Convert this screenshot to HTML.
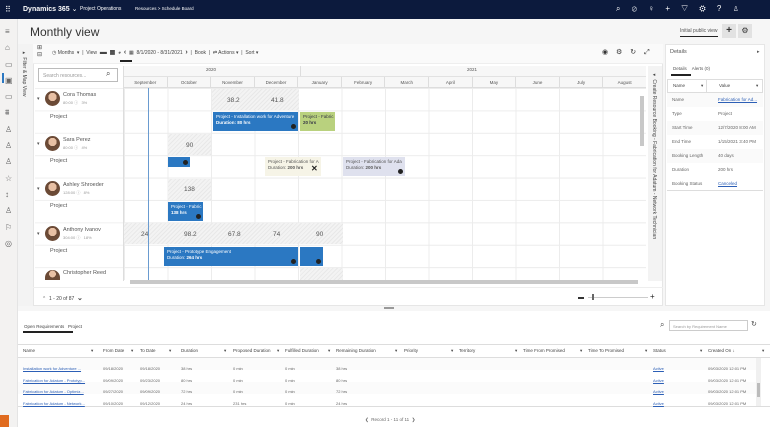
<!DOCTYPE html>
<html><head><meta charset="utf-8"><style>
*{box-sizing:border-box;margin:0;padding:0}
body{width:770px;height:427px;overflow:hidden;background:#fff;font-family:"Liberation Sans",sans-serif;color:#333;position:relative}
.a{position:absolute}
.t{font-size:5px;color:#555;white-space:nowrap}
.hatch{background:repeating-linear-gradient(135deg,#f3f3f3 0 2px,#e8e8e8 2px 3px)}
.bar{background:#2b78c2;color:#fff;font-size:4.5px;padding:2px 3px;line-height:6px;white-space:nowrap;overflow:hidden}
.dot{position:absolute;width:5px;height:5px;border-radius:50%;background:#222;right:2px;bottom:2px}
.av{position:absolute;width:15px;height:15px;border-radius:50%;background:radial-gradient(circle at 50% 40%,#e8c0a4 0 35%,#6b4a36 36%)}
.lnk{color:#2c5fb6;text-decoration:underline}
</style></head><body>
<div class="a" style="left:0;top:0;width:770px;height:19px;background:#0c1a3d"></div>
<div class="a t" style="left:5px;top:5px;color:#fff;font-size:8px">⠿</div>
<div class="a" style="left:23px;top:5px;color:#fff;font-size:7px;font-weight:bold">Dynamics 365 <span style="font-weight:normal">⌄</span></div>
<div class="a t" style="left:80px;top:6px;color:#fff;font-size:5px">Project Operations</div>
<div class="a t" style="left:135px;top:6px;color:#fff;font-size:4.5px">Resources &gt; Schedule Board</div>
<div class="a t" style="left:616px;top:4px;color:#fff;font-size:8px;word-spacing:9px">⌕ ⊘ ♀ + ▽ ⚙ ? ♙</div>
<div class="a" style="left:0;top:19px;width:18px;height:408px;background:#f3f2f1;border-right:1px solid #e4e4e4"></div>
<div class="a t" style="left:5px;top:24px;font-size:8px;color:#666;line-height:16.3px">≡<br>⌂<br>▭<br>▣<br>▭<br>⩩<br>♙<br>♙<br>♙<br>☆<br>↕<br>♙<br>⚐<br>◎</div>
<div class="a" style="left:2px;top:73px;width:2px;height:10px;background:#2b78c2"></div>
<div class="a" style="left:0;top:415px;width:9px;height:12px;background:#e06b1f"></div>
<div class="a" style="left:18px;top:19px;width:752px;height:408px;background:#f6f6f6"></div>
<div class="a" style="left:30px;top:25px;font-size:12px;color:#333">Monthly view</div>
<div class="a t" style="left:680px;top:28px;font-size:5px;border-bottom:1.5px solid #222;padding-bottom:2px">Initial public view</div>
<div class="a" style="left:722px;top:24px;width:14px;height:14px;background:#e2e2e2;font-size:10px;text-align:center;line-height:14px;font-weight:bold">+</div>
<div class="a" style="left:738px;top:24px;width:14px;height:14px;background:#e2e2e2;font-size:8px;text-align:center;line-height:14px">⚙</div>
<div class="a" style="left:18px;top:44px;width:15px;height:262px;background:#f3f3f3"></div>
<div class="a t" style="left:21px;top:50px;writing-mode:vertical-rl;font-size:5px;color:#444">▸ Filter &amp; Map View</div>
<div class="a" style="left:33px;top:44px;width:630px;height:262px;background:#fff;border:1px solid #e6e6e6"></div>
<div class="a" style="left:33px;top:44px;width:630px;height:20px;background:#fafafa;border-bottom:1px solid #eee"></div>
<div class="a t" style="left:37px;top:45px;font-size:6px;line-height:7px;color:#444">⊞<br>⊟</div>
<div class="a t" style="left:52px;top:49px;font-size:5px;color:#444">◷ Months &nbsp;▾ &nbsp;|&nbsp; View &nbsp;<b style="font-size:7px">▬</b> &nbsp;<b style="font-size:6px">▦</b> &nbsp;◕ &nbsp;<b style="font-size:7px">‹</b> &nbsp;▦ &nbsp;8/1/2020 - 8/31/2021 &nbsp;<b style="font-size:7px">›</b> &nbsp;| &nbsp;Book &nbsp;| &nbsp;⇄ Actions ▾ &nbsp;| &nbsp;Sort ▾</div>
<div class="a" style="left:120px;top:60px;width:12px;height:1.5px;background:#222"></div>
<div class="a t" style="left:602px;top:48px;font-size:7px;color:#333;word-spacing:6px">◉ ⚙ ↻ ⤢</div>
<div class="a" style="left:38px;top:68px;width:80px;height:14px;border:1px solid #bbb;background:#fff"></div>
<div class="a t" style="left:43px;top:73px;color:#999">Search resources...</div>
<div class="a t" style="left:106px;top:69px;font-size:8px;color:#444">⌕</div>
<div class="a" style="left:124px;top:66px;width:522px;height:22px;background:#f7f7f7;border-bottom:1px solid #ddd"></div>
<div class="a" style="left:124px;top:76px;width:522px;height:1px;background:#e2e2e2"></div>
<div class="a t" style="left:206px;top:67px;font-size:4.5px">2020</div>
<div class="a t" style="left:467px;top:67px;font-size:4.5px">2021</div>
<div class="a" style="left:300px;top:66px;width:1px;height:10px;background:#ddd"></div>
<div class="a" style="left:124px;top:77px;width:522px;height:11px;display:flex;font-size:4.5px;color:#555">
<div style="flex:1;text-align:center;border-right:1px solid #ddd;line-height:11px">September</div><div style="flex:1;text-align:center;border-right:1px solid #ddd;line-height:11px">October</div><div style="flex:1;text-align:center;border-right:1px solid #ddd;line-height:11px">November</div><div style="flex:1;text-align:center;border-right:1px solid #ddd;line-height:11px">December</div><div style="flex:1;text-align:center;border-right:1px solid #ddd;line-height:11px">January</div><div style="flex:1;text-align:center;border-right:1px solid #ddd;line-height:11px">February</div><div style="flex:1;text-align:center;border-right:1px solid #ddd;line-height:11px">March</div><div style="flex:1;text-align:center;border-right:1px solid #ddd;line-height:11px">April</div><div style="flex:1;text-align:center;border-right:1px solid #ddd;line-height:11px">May</div><div style="flex:1;text-align:center;border-right:1px solid #ddd;line-height:11px">June</div><div style="flex:1;text-align:center;border-right:1px solid #ddd;line-height:11px">July</div><div style="flex:1;text-align:center;line-height:11px">August</div></div>
<div class="a" style="left:124px;top:88px;width:522px;height:192px;background-image:linear-gradient(90deg,#ececec 1px,transparent 1px),linear-gradient(#ececec 1px,transparent 1px);background-size:43.5px 100%,100% 22.4px"></div>
<div class="a" style="left:123px;top:66px;width:1px;height:215px;background:#ddd"></div>
<div class="a hatch" style="left:212px;top:89px;width:87px;height:21px"></div>
<div class="a hatch" style="left:168px;top:134px;width:43px;height:21px"></div>
<div class="a hatch" style="left:168px;top:179px;width:43px;height:21px"></div>
<div class="a hatch" style="left:124px;top:223px;width:219px;height:21px"></div>
<div class="a hatch" style="left:300px;top:268px;width:43px;height:12px"></div>
<div class="a t" style="left:227px;top:97px;font-size:6.5px;color:#555">38.2</div>
<div class="a t" style="left:271px;top:97px;font-size:6.5px;color:#555">41.8</div>
<div class="a t" style="left:186px;top:142px;font-size:6.5px;color:#555">90</div>
<div class="a t" style="left:184px;top:186px;font-size:6.5px;color:#555">138</div>
<div class="a t" style="left:141px;top:231px;font-size:6.5px;color:#555">24</div>
<div class="a t" style="left:184px;top:231px;font-size:6.5px;color:#555">98.2</div>
<div class="a t" style="left:228px;top:231px;font-size:6.5px;color:#555">67.8</div>
<div class="a t" style="left:273px;top:231px;font-size:6.5px;color:#555">74</div>
<div class="a t" style="left:316px;top:231px;font-size:6.5px;color:#555">90</div>
<div class="a" style="left:148px;top:88px;width:1px;height:192px;background:#6a9bd0"></div>
<div class="a bar" style="left:213px;top:112px;width:85px;height:19px">Project - Installation work for Adventure<br><b>Duration: 80 hrs</b><div class="dot"></div></div>
<div class="a bar" style="left:300px;top:112px;width:35px;height:19px;background:#b9d17e;color:#334">Project - Fabric<br><b>20 hrs</b></div>
<div class="a bar" style="left:168px;top:157px;width:22px;height:10px"><div class="dot"></div></div>
<div class="a bar" style="left:265px;top:157px;width:56px;height:19px;background:#f6f4e7;color:#555">Project - Fabrication for A<br>Duration: <b>200 hrs</b></div>
<div class="a t" style="left:311px;top:164px;font-size:8px;color:#222;font-weight:bold">✕</div>
<div class="a bar" style="left:343px;top:157px;width:62px;height:19px;background:#dfe1ee;color:#555">Project - Fabrication for Ada<br>Duration: <b>200 hrs</b><div class="dot"></div></div>
<div class="a bar" style="left:168px;top:202px;width:35px;height:19px">Project - Fabric<br><b>138 hrs</b><div class="dot"></div></div>
<div class="a bar" style="left:164px;top:247px;width:134px;height:19px">Project - Prototype Engagement<br>Duration: <b>264 hrs</b><div class="dot"></div></div>
<div class="a bar" style="left:300px;top:247px;width:23px;height:19px"><div class="dot"></div></div>
<div class="a" style="left:35px;top:88px;width:88px;height:192px;background-image:linear-gradient(#f0f0f0 1px,transparent 1px);background-size:100% 22.4px"></div>
<div class="a t" style="left:37px;top:96px">▾</div><div class="av" style="left:45px;top:91px"></div>
<div class="a t" style="left:63px;top:92px;font-size:5.5px">Cora Thomas</div><div class="a t" style="left:63px;top:100px;font-size:4px;color:#999">80:00 ⓘ &nbsp;&nbsp;3%</div>
<div class="a t" style="left:50px;top:114px;font-size:5.5px">Project</div>
<div class="a t" style="left:37px;top:141px">▾</div><div class="av" style="left:45px;top:136px"></div>
<div class="a t" style="left:63px;top:137px;font-size:5.5px">Sara Perez</div><div class="a t" style="left:63px;top:145px;font-size:4px;color:#999">80:00 ⓘ &nbsp;&nbsp;4%</div>
<div class="a t" style="left:50px;top:158px;font-size:5.5px">Project</div>
<div class="a t" style="left:37px;top:186px">▾</div><div class="av" style="left:45px;top:181px"></div>
<div class="a t" style="left:63px;top:182px;font-size:5.5px">Ashley Shroeder</div><div class="a t" style="left:63px;top:190px;font-size:4px;color:#999">128:00 ⓘ &nbsp;&nbsp;8%</div>
<div class="a t" style="left:50px;top:203px;font-size:5.5px">Project</div>
<div class="a t" style="left:37px;top:231px">▾</div><div class="av" style="left:45px;top:226px"></div>
<div class="a t" style="left:63px;top:227px;font-size:5.5px">Anthony Ivanov</div><div class="a t" style="left:63px;top:235px;font-size:4px;color:#999">304:00 ⓘ &nbsp;&nbsp;18%</div>
<div class="a t" style="left:50px;top:248px;font-size:5.5px">Project</div>
<div class="a av" style="left:45px;top:270px;height:10px;border-radius:8px 8px 0 0"></div>
<div class="a t" style="left:63px;top:270px;font-size:5.5px">Christopher Reed</div>
<div class="a" style="left:130px;top:280px;width:508px;height:4px;background:#c8c8c8"></div>
<div class="a" style="left:640px;top:96px;width:4px;height:50px;background:#c8c8c8"></div>
<div class="a" style="left:33px;top:287px;width:630px;height:1px;background:#eee"></div>
<div class="a t" style="left:42px;top:294px;font-size:5px;color:#444">⌃ &nbsp;1 - 20 of 87 &nbsp;<b style="font-size:7px">⌄</b></div>
<div class="a" style="left:578px;top:297px;width:6px;height:1.5px;background:#333"></div>
<div class="a" style="left:588px;top:297px;width:60px;height:1px;background:#ccc"></div>
<div class="a" style="left:592px;top:294px;width:2px;height:6px;background:#666"></div>
<div class="a t" style="left:650px;top:292px;font-size:8px;color:#222">+</div>
<div class="a" style="left:648px;top:66px;width:14px;height:215px;background:#f3f3f3"></div>
<div class="a t" style="left:651px;top:72px;writing-mode:vertical-rl;font-size:5px;color:#444">◂ Create Resource Booking - Fabrication for Adatum - Network Technician</div>
<div class="a" style="left:665px;top:44px;width:100px;height:262px;background:#fff;border:1px solid #e6e6e6"></div>
<div class="a t" style="left:670px;top:49px;font-size:5.5px">Details</div><div class="a t" style="left:757px;top:49px">▸</div>
<div class="a t" style="left:673px;top:66px;font-size:4.5px">Details &nbsp;&nbsp;&nbsp;Alerts (0)</div>
<div class="a" style="left:671px;top:74px;width:20px;height:1.5px;background:#222"></div>
<div class="a" style="left:667px;top:79px;width:96px;height:14px;border:1px solid #ddd;font-size:4.5px;color:#444;line-height:12px"><span class="a" style="left:5px">Name</span><span class="a" style="left:33px">▾</span><span class="a" style="left:38px;top:0;height:12px;border-left:1px solid #ddd"></span><span class="a" style="left:51px">Value</span><span class="a" style="left:88px">▾</span></div>
<div class="a" style="left:667px;top:93px;width:96px;font-size:4.5px;color:#666">
<div style="height:14px;line-height:14px;position:relative;background:#fafafa"><span class="a" style="left:5px">Name</span><span class="a lnk" style="left:51px">Fabrication for Ad...</span></div>
<div style="height:14px;line-height:14px;position:relative"><span class="a" style="left:5px">Type</span><span class="a" style="left:51px">Project</span></div>
<div style="height:14px;line-height:14px;position:relative;background:#fafafa"><span class="a" style="left:5px">Start Time</span><span class="a" style="left:51px">12/7/2020 8:00 AM</span></div>
<div style="height:14px;line-height:14px;position:relative"><span class="a" style="left:5px">End Time</span><span class="a" style="left:51px">1/15/2021 3:40 PM</span></div>
<div style="height:14px;line-height:14px;position:relative;background:#fafafa"><span class="a" style="left:5px">Booking Length</span><span class="a" style="left:51px">40 days</span></div>
<div style="height:14px;line-height:14px;position:relative"><span class="a" style="left:5px">Duration</span><span class="a" style="left:51px">200 hrs</span></div>
<div style="height:14px;line-height:14px;position:relative;border-bottom:1px solid #ddd"><span class="a" style="left:5px">Booking Status</span><span class="a lnk" style="left:51px">Canceled</span></div>
</div>
<div class="a" style="left:384px;top:307px;width:10px;height:2px;background:#999"></div>
<div class="a" style="left:18px;top:311px;width:752px;height:116px;background:#fff"></div>
<div class="a t" style="left:24px;top:324px;font-size:4.5px;color:#444">Open Requirements &nbsp;&nbsp;Project</div>
<div class="a" style="left:23px;top:331px;width:50px;height:1.5px;background:#222"></div>
<div class="a t" style="left:660px;top:320px;font-size:8px;color:#444">⌕</div>
<div class="a" style="left:669px;top:320px;width:79px;height:11px;border:1px solid #ccc"></div>
<div class="a t" style="left:673px;top:324px;font-size:4px;color:#999">Search by Requirement Name</div>
<div class="a t" style="left:751px;top:320px;font-size:7px;color:#444">↻</div>
<div class="a" style="left:18px;top:344px;width:752px;height:14px;border-top:1px solid #ddd;border-bottom:1px solid #ddd"></div>
<div class="a" style="left:18px;top:358px;width:740px;height:12px;background:#fbfbfb"></div>
<div class="a" style="left:18px;top:382px;width:740px;height:12px;background:#fbfbfb"></div>
<div class="a" style="left:18px;top:406px;width:752px;height:1px;background:#ddd"></div>
<div class="a" style="left:756px;top:358px;width:5px;height:48px;background:#f0f0f0"></div>
<div class="a" style="left:757px;top:383px;width:3px;height:14px;background:#bbb"></div>
<div class="a" style="left:18px;top:348px;font-size:4.5px;color:#444;white-space:nowrap">
<span class="a" style="left:5px">Name</span><span class="a" style="left:73px">▾</span>
<span class="a" style="left:85px">From Date</span><span class="a" style="left:113px">▾</span>
<span class="a" style="left:122px">To Date</span><span class="a" style="left:151px">▾</span>
<span class="a" style="left:163px">Duration</span><span class="a" style="left:206px">▾</span>
<span class="a" style="left:215px">Proposed Duration</span><span class="a" style="left:259px">▾</span>
<span class="a" style="left:267px">Fulfilled Duration</span><span class="a" style="left:310px">▾</span>
<span class="a" style="left:318px">Remaining Duration</span><span class="a" style="left:377px">▾</span>
<span class="a" style="left:386px">Priority</span><span class="a" style="left:433px">▾</span>
<span class="a" style="left:441px">Territory</span><span class="a" style="left:497px">▾</span>
<span class="a" style="left:505px">Time From Promised</span><span class="a" style="left:562px">▾</span>
<span class="a" style="left:570px">Time To Promised</span><span class="a" style="left:627px">▾</span>
<span class="a" style="left:635px">Status</span><span class="a" style="left:682px">▾</span>
<span class="a" style="left:690px">Created On ↓</span><span class="a" style="left:744px">▾</span>
</div>
<div class="a" style="left:18px;top:363px;font-size:4px;color:#666;white-space:nowrap;line-height:11.7px;width:740px">
<div style="position:relative;height:11.7px"><span class="a lnk" style="left:5px">Installation work for Adventure ...</span><span class="a" style="left:85px">09/18/2020</span><span class="a" style="left:122px">09/18/2020</span><span class="a" style="left:163px">38 hrs</span><span class="a" style="left:215px">0 min</span><span class="a" style="left:267px">0 min</span><span class="a" style="left:318px">38 hrs</span><span class="a lnk" style="left:635px">Active</span><span class="a" style="left:690px">09/03/2020 12:01 PM</span></div>
<div style="position:relative;height:11.7px"><span class="a lnk" style="left:5px">Fabrication for Adatum - Prototyp...</span><span class="a" style="left:85px">09/09/2020</span><span class="a" style="left:122px">09/23/2020</span><span class="a" style="left:163px">80 hrs</span><span class="a" style="left:215px">0 min</span><span class="a" style="left:267px">0 min</span><span class="a" style="left:318px">80 hrs</span><span class="a lnk" style="left:635px">Active</span><span class="a" style="left:690px">09/03/2020 12:01 PM</span></div>
<div style="position:relative;height:11.7px"><span class="a lnk" style="left:5px">Fabrication for Adatum - Optimiz...</span><span class="a" style="left:85px">09/27/2020</span><span class="a" style="left:122px">09/09/2020</span><span class="a" style="left:163px">72 hrs</span><span class="a" style="left:215px">0 min</span><span class="a" style="left:267px">0 min</span><span class="a" style="left:318px">72 hrs</span><span class="a lnk" style="left:635px">Active</span><span class="a" style="left:690px">09/03/2020 12:01 PM</span></div>
<div style="position:relative;height:11.7px"><span class="a lnk" style="left:5px">Fabrication for Adatum - Network...</span><span class="a" style="left:85px">09/10/2020</span><span class="a" style="left:122px">09/12/2020</span><span class="a" style="left:163px">24 hrs</span><span class="a" style="left:215px">231 hrs</span><span class="a" style="left:267px">0 min</span><span class="a" style="left:318px">24 hrs</span><span class="a lnk" style="left:635px">Active</span><span class="a" style="left:690px">09/03/2020 12:01 PM</span></div>
</div>
<div class="a t" style="left:365px;top:417px;font-size:4.5px;color:#666">❮ &nbsp;Record 1 - 11 of 11 &nbsp;❯</div>
</body></html>
